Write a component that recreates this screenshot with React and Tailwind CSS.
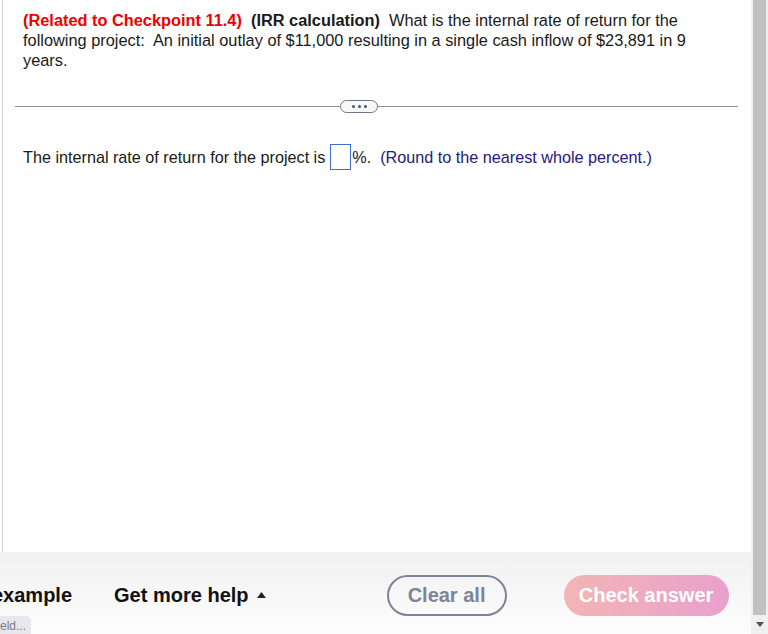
import React, { useState } from "react";

const App = () => {
  const [value, setValue] = useState("");

  return (
    <div
      className="flex w-[768px] h-[634px] overflow-hidden bg-white text-black"
      style={{ fontFamily: '"Liberation Sans", Arial, sans-serif' }}
    >
      <div className="flex flex-col flex-1 min-w-0">
        {/* question area */}
        <div className="flex h-[552px] shrink-0">
          <div className="w-[2px] shrink-0" />
          <div className="w-px shrink-0 bg-[#cdd3e0]" />
          <div className="flex-1 min-w-0">
            <p className="pl-[20px] pr-[60px] pt-[10px] text-[16.35px] leading-[20px] text-[#1a1a1a]">
              <span className="font-bold text-[#ee0000]">(Related to Checkpoint 11.4)</span>
              <span className="font-bold">&nbsp;&nbsp;(IRR calculation)</span>
              &nbsp; What is the internal rate of return for the following project:&nbsp; An initial outlay of $11,000 resulting in a single cash inflow of $23,891 in 9 years.
            </p>

            <div className="relative ml-[12px] mr-[13px] mt-[36px] h-px bg-[#8a93a3]">
              <button className="absolute left-[325px] top-[-6px] flex h-[13px] w-[38px] items-center justify-center gap-[3px] rounded-full border border-[#6f7888] bg-[#f7f8fa]">
                <span className="h-[3px] w-[3px] rounded-full bg-[#4a5262]" />
                <span className="h-[3px] w-[3px] rounded-full bg-[#4a5262]" />
                <span className="h-[3px] w-[3px] rounded-full bg-[#4a5262]" />
              </button>
            </div>

            <div className="flex items-center pl-[20px] mt-[37px] text-[16.2px] leading-[20px] text-[#1a1a1a]">
              <span>The internal rate of return for the project is</span>
              <input
                value={value}
                onChange={(e) => setValue(e.target.value)}
                className="ml-[5px] h-[26px] w-[21px] border border-[#3b6fd4] bg-white px-[2px] text-[16px] outline-none"
              />
              <span className="ml-[1px]">%.</span>
              <span className="ml-[9px] text-[#24207f]">(Round to the nearest whole percent.)</span>
            </div>
          </div>
        </div>

        {/* footer */}
        <div className="relative flex-1 bg-gradient-to-b from-[#f1f1f1] to-[#fdfdfd]">
          <div className="flex items-center h-[82px] pt-[4px]">
            <span className="-ml-[8px] text-[20px] font-bold text-[#111]">example</span>
            <span className="ml-[42px] flex items-center gap-[8px] text-[20px] font-bold text-[#111]">
              Get more help
              <svg width="9" height="6" viewBox="0 0 9 6">
                <path d="M0 6 L4.5 0 L9 6 Z" fill="#222" />
              </svg>
            </span>
            <button className="ml-[121px] h-[41px] w-[120px] rounded-full border-2 border-[#7c8597] text-[20px] font-bold text-[#7c8597]">
              Clear all
            </button>
            <button className="ml-[57px] h-[41px] w-[165px] rounded-full bg-gradient-to-r from-[#f2b5b5] to-[#e9a0cc] text-[20px] font-bold text-white">
              Check answer
            </button>
          </div>
          <div className="absolute left-0 bottom-0 h-[18px] w-[31px] rounded-tr-[5px] bg-[#e7e7ec] text-[12px] leading-[20px] text-[#7a7a86] overflow-hidden">
            eld...
          </div>
        </div>
      </div>

      {/* scrollbar */}
      <div className="flex w-[17px] shrink-0 flex-col bg-[#f0f0f0]">
        <div className="mx-[2px] h-[615px] bg-[#c1c1c1]" />
        <div className="flex flex-1 items-center justify-center">
          <svg width="8" height="5" viewBox="0 0 8 5">
            <path d="M0 0 L8 0 L4 5 Z" fill="#505050" />
          </svg>
        </div>
      </div>
    </div>
  );
};

export default App;
